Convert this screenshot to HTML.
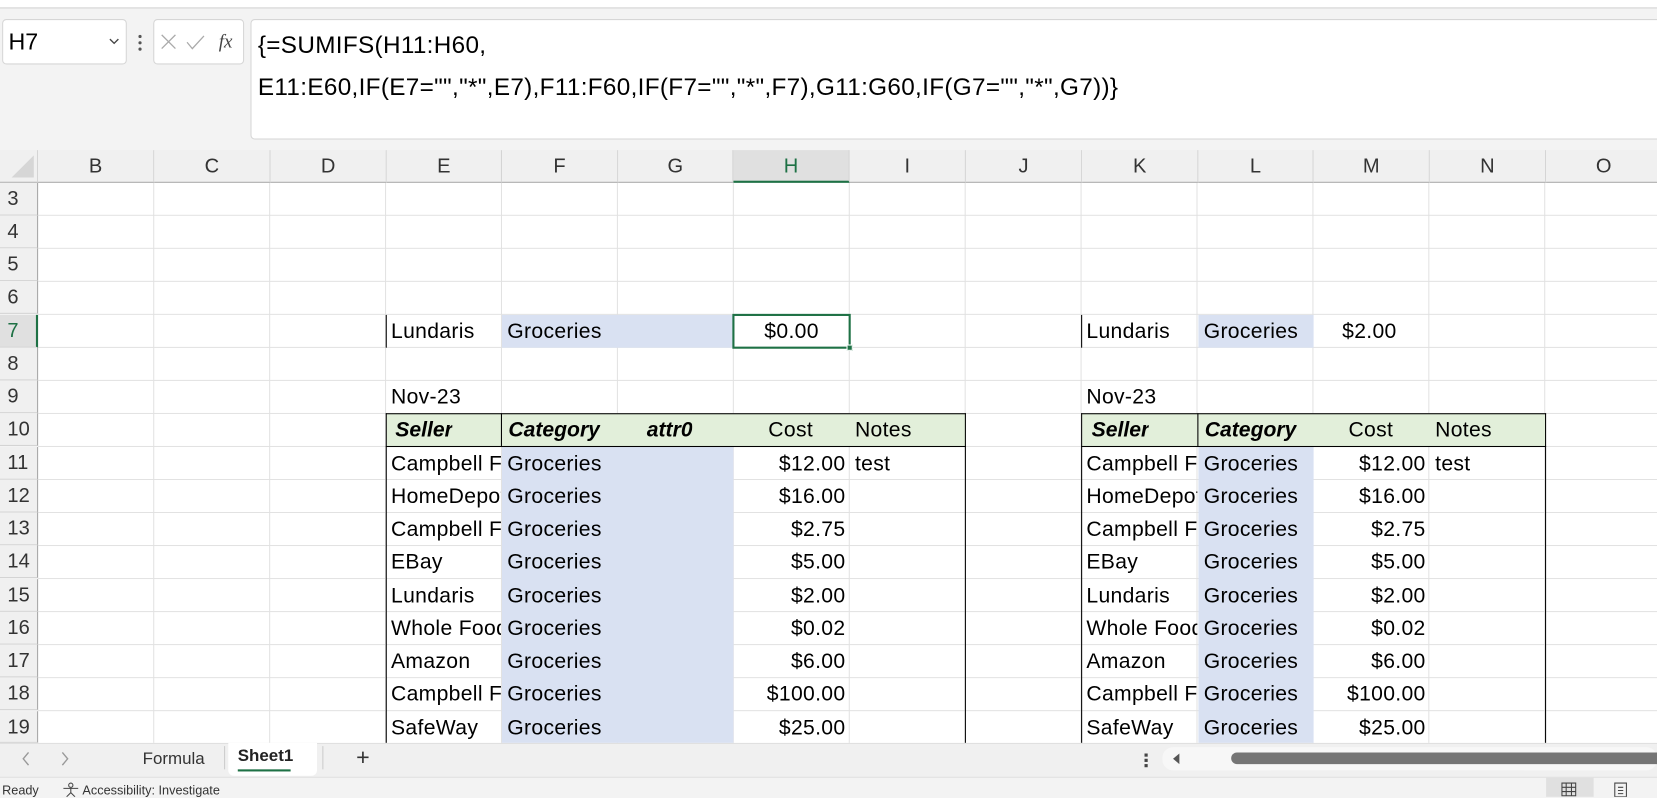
<!DOCTYPE html>
<html><head><meta charset="utf-8"><style>
*{margin:0;padding:0;box-sizing:border-box}
html,body{width:1657px;height:797px;overflow:hidden;background:#f3f3f3}
#w{position:absolute;left:0;top:0;width:1568px;height:754px;transform:scale(1.0568);transform-origin:0 0;font-family:"Liberation Sans",sans-serif;color:#000}
.a{position:absolute}
.t{position:absolute;font-size:20px;line-height:32px;white-space:nowrap;overflow:hidden;letter-spacing:0.3px}
.r{text-align:right}
.b{font-weight:bold;font-style:italic;letter-spacing:0}
.ch{position:absolute;top:142px;height:31px;font-size:19px;line-height:31px;text-align:center;color:#333;border-right:1px solid #d4d4d4;border-bottom:1px solid #ababab;background:#f0f0f0}
.rh{position:absolute;left:0;width:36px;height:31px;font-size:19px;line-height:31px;padding-left:7px;color:#333;background:#f0f0f0;border-right:1px solid #ababab;border-bottom:1px solid #d4d4d4}
</style></head><body><div id="w">
<div class="a" style="left:0;top:0;width:1568px;height:8px;background:#fff;border-bottom:1px solid #d0d0d0"></div>
<div class="a" style="left:2px;top:18px;width:118px;height:43px;background:#fff;border:1px solid #d6d6d6;border-radius:4px"></div>
<div class="a" style="left:8px;top:25px;font-size:22px;line-height:30px">H7</div>
<svg class="a" style="left:102px;top:34px" width="12" height="10"><path d="M2 3l4 4 4-4" fill="none" stroke="#444" stroke-width="1.3"/></svg>
<div class="a" style="left:131px;top:33px;width:3px;height:3px;background:#555;border-radius:2px"></div>
<div class="a" style="left:131px;top:39px;width:3px;height:3px;background:#555;border-radius:2px"></div>
<div class="a" style="left:131px;top:45px;width:3px;height:3px;background:#555;border-radius:2px"></div>
<div class="a" style="left:145px;top:18px;width:86px;height:43px;background:#fff;border:1px solid #d6d6d6;border-radius:4px"></div>
<svg class="a" style="left:150px;top:30px" width="80" height="20"><path d="M3 3l13 13M16 3L3 16" stroke="#aaa" stroke-width="1.2"/><path d="M27 10l5 6 11-12" fill="none" stroke="#aaa" stroke-width="1.2"/><text x="57" y="15" font-family="Liberation Serif" font-style="italic" font-size="18" fill="#444">fx</text></svg>
<div class="a" style="left:237px;top:18px;width:1340px;height:114px;background:#fff;border:1px solid #d6d6d6;border-radius:4px"></div>
<div class="a" style="left:244px;top:22px;font-size:23px;line-height:40px;letter-spacing:0.3px">{=SUMIFS(H11:H60,<br>E11:E60,IF(E7="","*",E7),F11:F60,IF(F7="","*",F7),G11:G60,IF(G7="","*",G7))}</div>
<div class="a" style="left:36px;top:173px;width:1532px;height:530px;background:#fff;
background-image:linear-gradient(to right,#e1e1e1 1px,transparent 1px),linear-gradient(to bottom,#e1e1e1 1px,transparent 1px);background-size:109.7px 31.25px;background-position:109px 30.25px"></div>
<div class="ch" style="left:0;width:36px"><svg class="a" style="left:9px;top:5px" width="24" height="22"><path d="M23 0V21H2Z" fill="#d6d6d6"/></svg></div>
<div class="ch" style="left:36px;width:110px">B</div>
<div class="ch" style="left:146px;width:110px">C</div>
<div class="ch" style="left:256px;width:110px">D</div>
<div class="ch" style="left:366px;width:109px">E</div>
<div class="ch" style="left:475px;width:110px">F</div>
<div class="ch" style="left:585px;width:109px">G</div>
<div class="ch" style="left:694px;width:110px;background:#e0e0e0;color:#1e7145;border-bottom:2px solid #1e7145">H</div>
<div class="ch" style="left:804px;width:110px">I</div>
<div class="ch" style="left:914px;width:110px">J</div>
<div class="ch" style="left:1024px;width:110px">K</div>
<div class="ch" style="left:1134px;width:109px">L</div>
<div class="ch" style="left:1243px;width:110px">M</div>
<div class="ch" style="left:1353px;width:110px">N</div>
<div class="ch" style="left:1463px;width:110px">O</div>
<div class="rh" style="top:173px">3</div>
<div class="rh" style="top:204px">4</div>
<div class="rh" style="top:235px">5</div>
<div class="rh" style="top:266px">6</div>
<div class="rh" style="top:298px;background:#e0e0e0;color:#1e7145;border-right:2px solid #1e7145">7</div>
<div class="rh" style="top:329px">8</div>
<div class="rh" style="top:360px">9</div>
<div class="rh" style="top:391px">10</div>
<div class="rh" style="top:423px">11</div>
<div class="rh" style="top:454px">12</div>
<div class="rh" style="top:485px">13</div>
<div class="rh" style="top:516px">14</div>
<div class="rh" style="top:548px">15</div>
<div class="rh" style="top:579px">16</div>
<div class="rh" style="top:610px">17</div>
<div class="rh" style="top:641px">18</div>
<div class="rh" style="top:673px;height:30px">19</div>
<div class="a" style="left:475px;top:298px;width:219px;height:31px;background:#d9e1f2"></div>
<div class="a" style="left:1134px;top:298px;width:109px;height:31px;background:#d9e1f2"></div>
<div class="a" style="left:366px;top:391px;width:548px;height:32px;background:#e2efda"></div>
<div class="a" style="left:1024px;top:391px;width:439px;height:32px;background:#e2efda"></div>
<div class="a" style="left:475px;top:423px;width:219px;height:280px;background:#d9e1f2"></div>
<div class="a" style="left:1134px;top:423px;width:109px;height:280px;background:#d9e1f2"></div>
<div class="a" style="left:365px;top:298px;width:1px;height:31px;background:#000"></div>
<div class="a" style="left:1023px;top:298px;width:1px;height:31px;background:#000"></div>
<div class="a" style="left:365px;top:391px;width:549px;height:312px;border:1px solid #000;border-bottom:none"></div>
<div class="a" style="left:365px;top:422px;width:549px;height:1px;background:#000"></div>
<div class="a" style="left:474px;top:391px;width:1px;height:31px;background:#000"></div>
<div class="a" style="left:1023px;top:391px;width:440px;height:312px;border:1px solid #000;border-bottom:none"></div>
<div class="a" style="left:1023px;top:422px;width:440px;height:1px;background:#000"></div>
<div class="a" style="left:1133px;top:391px;width:1px;height:31px;background:#000"></div>
<div class="a" style="left:693px;top:297px;width:112px;height:33px;border:2px solid #1e7145"></div>
<div class="a" style="left:801px;top:326px;width:6px;height:6px;background:#1e7145;border:1px solid #fff"></div>
<div class="t" style="left:370px;top:298px">Lundaris</div>
<div class="t" style="left:480px;top:298px">Groceries</div>
<div class="t" style="left:694px;top:298px;width:110px;text-align:center">$0.00</div>
<div class="t" style="left:1028px;top:298px">Lundaris</div>
<div class="t" style="left:1139px;top:298px">Groceries</div>
<div class="t" style="left:1270px;top:298px">$2.00</div>
<div class="t" style="left:370px;top:360px">Nov-23</div>
<div class="t" style="left:1028px;top:360px">Nov-23</div>
<div class="t b" style="left:374px;top:391px">Seller</div>
<div class="t b" style="left:481px;top:391px">Category</div>
<div class="t b" style="left:612px;top:391px">attr0</div>
<div class="t" style="left:727px;top:391px">Cost</div>
<div class="t" style="left:809px;top:391px">Notes</div>
<div class="t b" style="left:1033px;top:391px">Seller</div>
<div class="t b" style="left:1140px;top:391px">Category</div>
<div class="t" style="left:1276px;top:391px">Cost</div>
<div class="t" style="left:1358px;top:391px">Notes</div>

<div class="t" style="left:370px;top:423px;width:104px">Campbell Farms</div><div class="t" style="left:480px;top:423px">Groceries</div><div class="t r" style="left:694px;top:423px;width:106px">$12.00</div><div class="t" style="left:809px;top:423px">test</div>
<div class="t" style="left:370px;top:454px;width:104px">HomeDepot</div><div class="t" style="left:480px;top:454px">Groceries</div><div class="t r" style="left:694px;top:454px;width:106px">$16.00</div>
<div class="t" style="left:370px;top:485px;width:104px">Campbell Farms</div><div class="t" style="left:480px;top:485px">Groceries</div><div class="t r" style="left:694px;top:485px;width:106px">$2.75</div>
<div class="t" style="left:370px;top:516px;width:104px">EBay</div><div class="t" style="left:480px;top:516px">Groceries</div><div class="t r" style="left:694px;top:516px;width:106px">$5.00</div>
<div class="t" style="left:370px;top:548px;width:104px">Lundaris</div><div class="t" style="left:480px;top:548px">Groceries</div><div class="t r" style="left:694px;top:548px;width:106px">$2.00</div>
<div class="t" style="left:370px;top:579px;width:104px">Whole Foods</div><div class="t" style="left:480px;top:579px">Groceries</div><div class="t r" style="left:694px;top:579px;width:106px">$0.02</div>
<div class="t" style="left:370px;top:610px;width:104px">Amazon</div><div class="t" style="left:480px;top:610px">Groceries</div><div class="t r" style="left:694px;top:610px;width:106px">$6.00</div>
<div class="t" style="left:370px;top:641px;width:104px">Campbell Farms</div><div class="t" style="left:480px;top:641px">Groceries</div><div class="t r" style="left:694px;top:641px;width:106px">$100.00</div>
<div class="t" style="left:370px;top:673px;width:104px;height:30px">SafeWay</div><div class="t" style="left:480px;top:673px;height:30px">Groceries</div><div class="t r" style="left:694px;top:673px;width:106px;height:30px">$25.00</div>

<div class="t" style="left:1028px;top:423px;width:105px">Campbell Farms</div><div class="t" style="left:1139px;top:423px">Groceries</div><div class="t r" style="left:1243px;top:423px;width:106px">$12.00</div><div class="t" style="left:1358px;top:423px">test</div>
<div class="t" style="left:1028px;top:454px;width:105px">HomeDepot</div><div class="t" style="left:1139px;top:454px">Groceries</div><div class="t r" style="left:1243px;top:454px;width:106px">$16.00</div>
<div class="t" style="left:1028px;top:485px;width:105px">Campbell Farms</div><div class="t" style="left:1139px;top:485px">Groceries</div><div class="t r" style="left:1243px;top:485px;width:106px">$2.75</div>
<div class="t" style="left:1028px;top:516px;width:105px">EBay</div><div class="t" style="left:1139px;top:516px">Groceries</div><div class="t r" style="left:1243px;top:516px;width:106px">$5.00</div>
<div class="t" style="left:1028px;top:548px;width:105px">Lundaris</div><div class="t" style="left:1139px;top:548px">Groceries</div><div class="t r" style="left:1243px;top:548px;width:106px">$2.00</div>
<div class="t" style="left:1028px;top:579px;width:105px">Whole Foods</div><div class="t" style="left:1139px;top:579px">Groceries</div><div class="t r" style="left:1243px;top:579px;width:106px">$0.02</div>
<div class="t" style="left:1028px;top:610px;width:105px">Amazon</div><div class="t" style="left:1139px;top:610px">Groceries</div><div class="t r" style="left:1243px;top:610px;width:106px">$6.00</div>
<div class="t" style="left:1028px;top:641px;width:105px">Campbell Farms</div><div class="t" style="left:1139px;top:641px">Groceries</div><div class="t r" style="left:1243px;top:641px;width:106px">$100.00</div>
<div class="t" style="left:1028px;top:673px;width:105px;height:30px">SafeWay</div><div class="t" style="left:1139px;top:673px;height:30px">Groceries</div><div class="t r" style="left:1243px;top:673px;width:106px;height:30px">$25.00</div>

<div class="a" style="left:0;top:703px;width:1568px;height:32px;background:#f0f0f0;border-top:1px solid #e0e0e0"></div>
<svg class="a" style="left:18px;top:709px" width="60" height="18"><path d="M9 3L4 9l5 6M41 3l5 6-5 6" fill="none" stroke="#999" stroke-width="1.3"/></svg>
<div class="a" style="left:135px;top:708px;font-size:16px;line-height:22px;color:#333">Formula</div>
<div class="a" style="left:212px;top:706px;width:1px;height:22px;background:#ccc"></div>
<div class="a" style="left:216px;top:703px;width:84px;height:31px;background:#fff;border-radius:0 0 5px 5px"></div>
<div class="a" style="left:225px;top:705px;font-size:16px;line-height:22px;font-weight:bold;color:#222">Sheet1</div>
<div class="a" style="left:225px;top:728px;width:50px;height:2px;background:#1e7145"></div>
<div class="a" style="left:305px;top:706px;width:1px;height:22px;background:#ccc"></div>
<div class="a" style="left:337px;top:704px;font-size:22px;line-height:26px;color:#333">+</div>
<div class="a" style="left:1083px;top:713px;width:3px;height:3px;background:#444"></div>
<div class="a" style="left:1083px;top:718px;width:3px;height:3px;background:#444"></div>
<div class="a" style="left:1083px;top:723px;width:3px;height:3px;background:#444"></div>
<div class="a" style="left:1100px;top:707px;width:468px;height:22px;background:#f7f7f7;border-radius:10px"></div>
<svg class="a" style="left:1108px;top:712px" width="10" height="12"><path d="M8 1L2 6l6 5Z" fill="#555"/></svg>
<div class="a" style="left:1165px;top:712px;width:403px;height:11px;background:#757575;border-radius:6px 0 0 6px"></div>
<div class="a" style="left:0;top:735px;width:1568px;height:19px;background:#f3f3f3;border-top:1px solid #e0e0e0"></div>
<div class="a" style="left:2px;top:741px;font-size:12px;line-height:14px;color:#333">Ready</div>
<svg class="a" style="left:58px;top:740px" width="18" height="14"><circle cx="9" cy="3" r="2" fill="none" stroke="#444"/><path d="M2 6h14M9 6v4l-4 4M9 10l4 4" fill="none" stroke="#444"/></svg>
<div class="a" style="left:78px;top:741px;font-size:12px;line-height:14px;color:#333">Accessibility: Investigate</div>
<div class="a" style="left:1463px;top:736px;width:45px;height:18px;background:#e0e0e0"></div>
<svg class="a" style="left:1477px;top:740px" width="70" height="14"><path d="M1 1h13v12H1zM1 5h13M1 9h13M5 1v12M10 1v12" fill="none" stroke="#444"/><path d="M51 1h11v13H51zM54 5h5M54 8h5M54 11h5" fill="none" stroke="#444"/></svg>
</div></body></html>
